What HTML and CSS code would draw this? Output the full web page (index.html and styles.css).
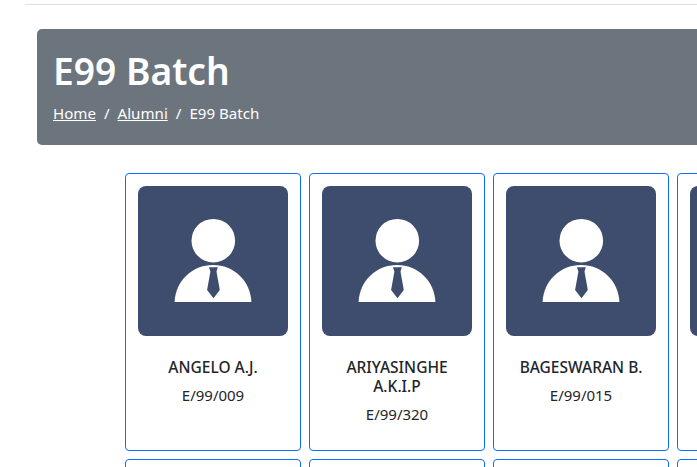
FILE: index.html
```html
<!DOCTYPE html>
<html lang="en">
<head>
<meta charset="utf-8">
<title>E99 Batch</title>
<link rel="stylesheet" href="styles.css">
</head>
<body>
<svg width="0" height="0" class="defs"><defs>
<symbol id="person" viewBox="0 0 150 150">
<rect width="150" height="150" fill="#3e4d6d"/>
<circle cx="75.3" cy="54.7" r="21.8" fill="#fff"/>
<path d="M36.6 116C37.5 95 54 79 75 79s37.500 16 38.400 37z" fill="#fff"/>
<path d="M71 81.200h8.800l-1.300 4.300 3.300 18.500-6.300 8.300-6.400-8.300 3.300-18.500z" fill="#3e4d6d"/>
</symbol>
</defs></svg>
<div class="page">
  <hr class="rule">
  <header class="hero">
    <h1 class="hero-title">E99 Batch</h1>
    <nav class="crumbs"><a href="#">Home</a><span class="sep">/</span><a href="#">Alumni</a><span class="sep">/</span><span>E99 Batch</span></nav>
  </header>
  <main class="grid">
    <article class="card"><svg class="photo"><use href="#person"/></svg><h2 class="name">ANGELO A.J.</h2><p class="reg">E/99/009</p></article>
    <article class="card"><svg class="photo"><use href="#person"/></svg><h2 class="name">ARIYASINGHE A.K.I.P</h2><p class="reg">E/99/320</p></article>
    <article class="card"><svg class="photo"><use href="#person"/></svg><h2 class="name">BAGESWARAN B.</h2><p class="reg">E/99/015</p></article>
    <article class="card"><svg class="photo"><use href="#person"/></svg></article>
    <article class="card"></article>
    <article class="card"></article>
    <article class="card"></article>
    <article class="card"></article>
  </main>
</div>
</body>
</html>
```
FILE: styles.css
```css
html, body {
  margin: 0;
  height: 467px;
  overflow: hidden;
  background: #fff;
}
body {
  font-family: "Noto Sans", "Open Sans", sans-serif;
  color: #212529;
}
.defs {
  display: block;
  height: 0;
}
.page {
  width: 1000px;
  padding: 4px 0 0 25px;
}
.rule {
  margin: 0 0 24px;
  border: 0;
  border-top: 1px solid #dee2e6;
}
.hero {
  margin-left: 12px;
  height: 116px;
  box-sizing: border-box;
  padding: 17px 16px 16px;
  background: #6c757d;
  color: #fff;
  border-radius: 5px;
}
.hero-title {
  margin: 0 0 6px;
  font-size: 37.2px;
  line-height: 50px;
  font-weight: 600;
}
.crumbs {
  display: flex;
  font-size: 15.1px;
  line-height: 22px;
}
.crumbs a {
  color: #fff;
}
.sep {
  padding: 0 8px;
}
.grid {
  display: grid;
  grid-template-columns: repeat(4, 176px);
  grid-auto-rows: 278px;
  gap: 8px;
  margin: 28px 0 0 100px;
}
.card {
  box-sizing: border-box;
  padding: 12px;
  border: 1px solid #0d6efd;
  border-radius: 4px;
  text-align: center;
}
.photo {
  display: block;
  width: 150px;
  height: 150px;
  border-radius: 8px;
}
.name {
  margin: 22px 8px 8px;
  font-size: 15.500px;
  line-height: 19px;
  font-weight: 500;
}
.reg {
  margin: 0;
  font-size: 15px;
  line-height: 21px;
}
```
